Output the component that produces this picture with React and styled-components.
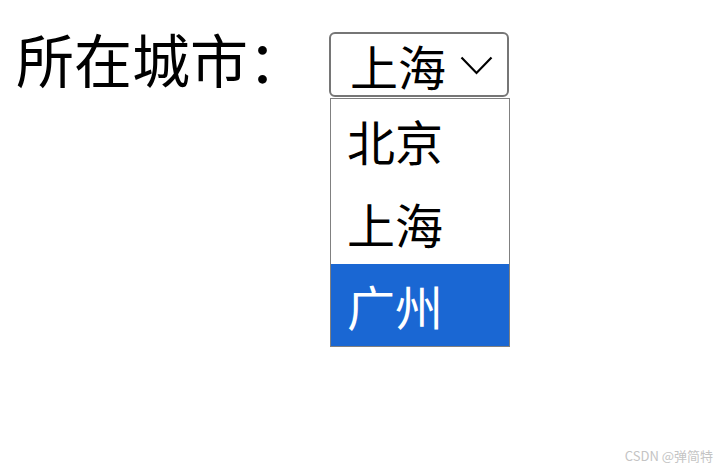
import React from "react";
import styled, { createGlobalStyle } from "styled-components";

const Global = createGlobalStyle`
  html, body { margin: 0; padding: 0; background: #fff; }
  body { font-family: "Noto Sans CJK SC", "Noto Sans", sans-serif; color: #000; }
`;

const Page = styled.div`
  position: relative;
  width: 723px;
  height: 470px;
  overflow: hidden;
  box-sizing: border-box;
  padding: 29px 0 0 16px;
`;

const Row = styled.div`
  display: flex;
  align-items: flex-start;
  gap: 23px;
`;

const Label = styled.span`
  font-size: 58px;
  line-height: 1;
  white-space: nowrap;
`;

const SelectWrap = styled.div`
  position: relative;
  margin-top: 3px;
`;

const SelectBox = styled.div`
  box-sizing: border-box;
  width: 180px;
  height: 65px;
  border: 2px solid #767676;
  border-radius: 6px;
  display: flex;
  align-items: center;
  justify-content: space-between;
  padding: 0 14px 0 19px;
  font-size: 48px;
  line-height: 1;
  background: #fff;
`;

const Chevron = styled.svg`
  width: 33px;
  height: 19px;
  flex: none;
  margin-top: 2px;
`;

const List = styled.ul`
  position: absolute;
  top: 66px;
  left: 1px;
  width: 180px;
  box-sizing: border-box;
  margin: 0;
  padding: 0;
  list-style: none;
  border: 1px solid #808080;
  background: #fff;
`;

const Option = styled.li`
  height: ${(p) => p.$h}px;
  display: flex;
  align-items: center;
  padding-left: 16px;
  font-size: 48px;
  line-height: 1;
  background: ${(p) => (p.$active ? "#1a67d3" : "#fff")};
  color: ${(p) => (p.$active ? "#fff" : "#000")};
`;

const Watermark = styled.div`
  position: absolute;
  right: 10px;
  bottom: 5px;
  font-size: 13px;
  color: #c4c4c4;
  font-family: "Noto Sans CJK SC", "Liberation Sans", sans-serif;
`;

const options = [
  { label: "北京", h: 82 },
  { label: "上海", h: 83 },
  { label: "广州", h: 82, active: true },
];

export default function App() {
  return (
    <>
      <Global />
      <Page>
        <Row>
          <Label>所在城市：</Label>
          <SelectWrap>
            <SelectBox>
              <span>上海</span>
              <Chevron viewBox="0 0 33 19">
                <polyline
                  points="1.5,1.5 16.5,17 31.5,1.5"
                  fill="none"
                  stroke="#000"
                  strokeWidth="2.2"
                />
              </Chevron>
            </SelectBox>
            <List>
              {options.map((o) => (
                <Option key={o.label} $h={o.h} $active={o.active}>
                  {o.label}
                </Option>
              ))}
            </List>
          </SelectWrap>
        </Row>
        <Watermark>CSDN @弹简特</Watermark>
      </Page>
    </>
  );
}
